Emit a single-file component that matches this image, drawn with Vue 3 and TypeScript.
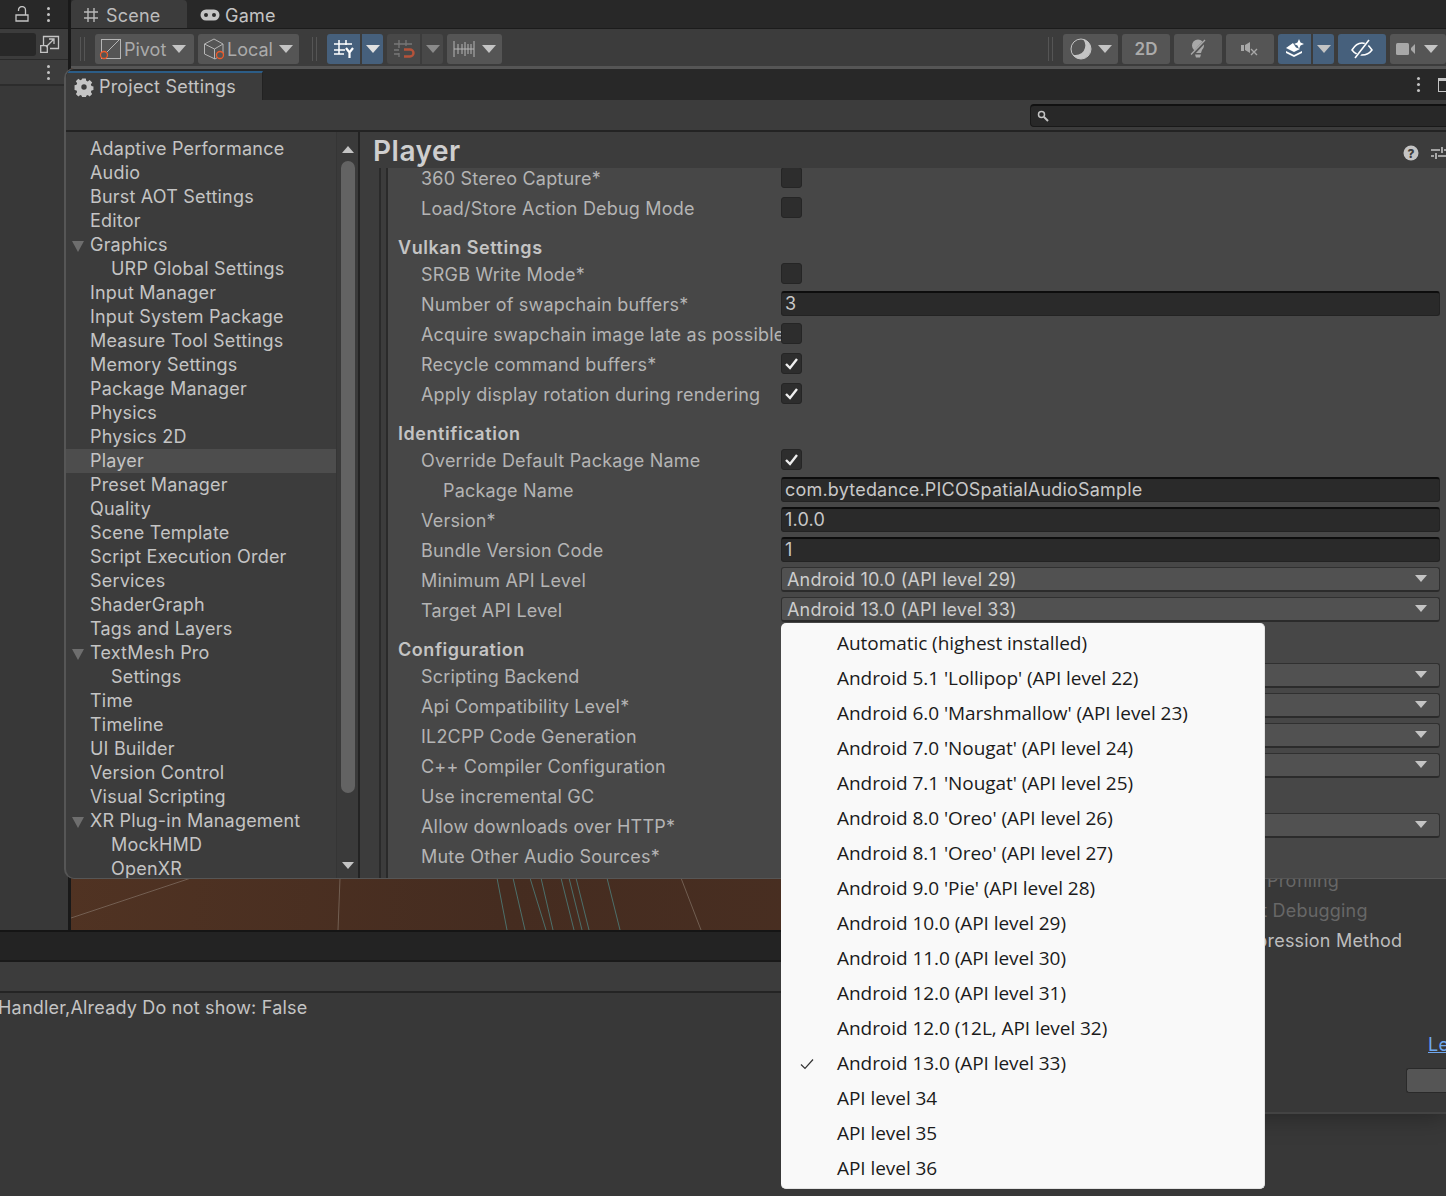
<script setup lang="ts">
type RowKind = 'off' | 'on' | 'input' | 'select'

interface NavItem {
  name: string
  child?: boolean
  open?: boolean
  active?: boolean
}

interface Row {
  label: string
  kind: RowKind
  value?: string
  sub?: boolean
}

interface Section {
  title?: string
  rows: Row[]
}

const navItems: NavItem[] = [
  { name: 'Adaptive Performance' },
  { name: 'Audio' },
  { name: 'Burst AOT Settings' },
  { name: 'Editor' },
  { name: 'Graphics', open: true },
  { name: 'URP Global Settings', child: true },
  { name: 'Input Manager' },
  { name: 'Input System Package' },
  { name: 'Measure Tool Settings' },
  { name: 'Memory Settings' },
  { name: 'Package Manager' },
  { name: 'Physics' },
  { name: 'Physics 2D' },
  { name: 'Player', active: true },
  { name: 'Preset Manager' },
  { name: 'Quality' },
  { name: 'Scene Template' },
  { name: 'Script Execution Order' },
  { name: 'Services' },
  { name: 'ShaderGraph' },
  { name: 'Tags and Layers' },
  { name: 'TextMesh Pro', open: true },
  { name: 'Settings', child: true },
  { name: 'Time' },
  { name: 'Timeline' },
  { name: 'UI Builder' },
  { name: 'Version Control' },
  { name: 'Visual Scripting' },
  { name: 'XR Plug-in Management', open: true },
  { name: 'MockHMD', child: true },
  { name: 'OpenXR', child: true },
]

const sections: Section[] = [
  {
    rows: [
      { label: '360 Stereo Capture*', kind: 'off' },
      { label: 'Load/Store Action Debug Mode', kind: 'off' },
    ],
  },
  {
    title: 'Vulkan Settings',
    rows: [
      { label: 'SRGB Write Mode*', kind: 'off' },
      { label: 'Number of swapchain buffers*', kind: 'input', value: '3' },
      { label: 'Acquire swapchain image late as possible*', kind: 'off' },
      { label: 'Recycle command buffers*', kind: 'on' },
      { label: 'Apply display rotation during rendering', kind: 'on' },
    ],
  },
  {
    title: 'Identification',
    rows: [
      { label: 'Override Default Package Name', kind: 'on' },
      { label: 'Package Name', kind: 'input', value: 'com.bytedance.PICOSpatialAudioSample', sub: true },
      { label: 'Version*', kind: 'input', value: '1.0.0' },
      { label: 'Bundle Version Code', kind: 'input', value: '1' },
      { label: 'Minimum API Level', kind: 'select', value: 'Android 10.0 (API level 29)' },
      { label: 'Target API Level', kind: 'select', value: 'Android 13.0 (API level 33)' },
    ],
  },
  {
    title: 'Configuration',
    rows: [
      { label: 'Scripting Backend', kind: 'select' },
      { label: 'Api Compatibility Level*', kind: 'select' },
      { label: 'IL2CPP Code Generation', kind: 'select' },
      { label: 'C++ Compiler Configuration', kind: 'select' },
      { label: 'Use incremental GC', kind: 'off' },
      { label: 'Allow downloads over HTTP*', kind: 'select' },
      { label: 'Mute Other Audio Sources*', kind: 'off' },
    ],
  },
]

const apiLevels: string[] = [
  'Automatic (highest installed)',
  "Android 5.1 'Lollipop' (API level 22)",
  "Android 6.0 'Marshmallow' (API level 23)",
  "Android 7.0 'Nougat' (API level 24)",
  "Android 7.1 'Nougat' (API level 25)",
  "Android 8.0 'Oreo' (API level 26)",
  "Android 8.1 'Oreo' (API level 27)",
  "Android 9.0 'Pie' (API level 28)",
  'Android 10.0 (API level 29)',
  'Android 11.0 (API level 30)',
  'Android 12.0 (API level 31)',
  'Android 12.0 (12L, API level 32)',
  'Android 13.0 (API level 33)',
  'API level 34',
  'API level 35',
  'API level 36',
]
const selectedLevel = 'Android 13.0 (API level 33)'
</script>

<template>
  <div class="editor">
    <div class="upper">
      <aside class="hierarchy">
        <div class="hier-tabs">
          <svg class="lock" width="14" height="16" viewBox="0 0 14 16"><path d="M3.500 5V4a3.500 3.500 0 0 1 7 0v5H1v6h12V9h-2.500" fill="none" stroke="#c4c4c4" stroke-width="1.300" /></svg>
          <span class="dots"><i></i><i></i><i></i></span>
        </div>
        <div class="hier-search">
          <div class="hier-field"></div>
          <svg width="20" height="18" viewBox="0 0 20 18"><path d="M3.500 10V1.500h15v12H10" fill="none" stroke="#c4c4c4" stroke-width="1.300" /><path d="M.7 10.700h6.600v6.600H.7z" fill="none" stroke="#c4c4c4" stroke-width="1.300" /><path d="M6 12l8-8M9 4h5v5" fill="none" stroke="#c4c4c4" stroke-width="1.300" /></svg>
        </div>
        <div class="hier-head"><span class="dots"><i></i><i></i><i></i></span></div>
      </aside>

      <div class="scene">
        <div class="tabs">
          <div class="tab tab-active">
            <svg width="16" height="16" viewBox="0 0 16 16"><path d="M5 1v14M11 1v14M1 5h14M1 11h14" stroke="#b8b8b8" stroke-width="1.400" /></svg>
            <span>Scene</span>
          </div>
          <div class="tab">
            <svg width="20" height="12" viewBox="0 0 20 12"><rect x="0.500" y="0.500" width="19" height="11" rx="5.500" fill="#c4c4c4" /><circle cx="6" cy="6" r="2" fill="#2b2b2b" /><circle cx="14" cy="6" r="2" fill="#2b2b2b" /></svg>
            <span>Game</span>
          </div>
        </div>

        <div class="toolbar">
          <span class="grip"></span>
          <button class="tool wide pivot">
            <svg width="22" height="22" viewBox="0 0 22 22"><rect x="2.500" y="1.500" width="19" height="19" fill="none" stroke="#b5b5b5" stroke-width="1" /><path d="M6 16L20 2" stroke="#b5b5b5" /><circle cx="5" cy="17" r="3.500" fill="#555" stroke="#f05a28" stroke-width="1.300" /></svg>
            <span>Pivot</span><i class="caret"></i>
          </button>
          <button class="tool wide local">
            <svg width="24" height="22" viewBox="0 0 24 22"><path d="M1.500 6L11 1l9 5v10l-8 5-10.500-5zM1.500 6l10 5 8.500-5M11.500 11v10" fill="none" stroke="#b5b5b5" /><circle cx="17" cy="17" r="3.500" fill="#555" stroke="#f05a28" stroke-width="1.300" /></svg>
            <span>Local</span><i class="caret"></i>
          </button>
          <span class="grip"></span>
          <div class="split">
            <button class="tool blue seg-main">
              <svg width="22" height="20" viewBox="0 0 22 20"><path d="M6 1v14M13 1v5M1 5h18M1 11h11M1 15h10" stroke="#fff" stroke-width="1.500" fill="none" /><path d="M13 9l3.500 4.500L20 9M16.500 13.500V19" stroke="#fff" stroke-width="2.200" fill="none" /></svg>
            </button>
            <button class="tool blue seg-arrow"><i class="caret bright"></i></button>
          </div>
          <div class="split">
            <button class="tool dim seg-main">
              <svg width="22" height="20" viewBox="0 0 22 20"><path d="M6 1v8M13 1v6M1 5h18M1 11h5M1 15h5M6 14v4" stroke="#777" stroke-width="1.300" fill="none" /><path d="M11 10.500h6a3 3 0 0 1 0 7h-6" fill="none" stroke="#b5533a" stroke-width="2.400" /></svg>
            </button>
            <button class="tool dim seg-arrow"><i class="caret muted"></i></button>
          </div>
          <button class="tool ticks">
            <svg width="22" height="20" viewBox="0 0 22 20"><path d="M1 2v16M21 2v16M1 10h20M5 5v10M9 5v10M12 3v14M15 5v10M18 5v10" stroke="#b5b5b5" fill="none" /></svg>
            <i class="caret"></i>
          </button>

          <span class="spacer"></span>

          <span class="grip"></span>
          <button class="tool shading">
            <svg width="22" height="22" viewBox="0 0 22 22"><circle cx="11" cy="11" r="10" fill="none" stroke="#c4c4c4" stroke-width="1" /><path d="M13 1.200A10 10 0 1 1 2.500 16.500A9.600 9.600 0 0 0 13 1.200z" fill="#c4c4c4" /></svg>
            <i class="caret"></i>
          </button>
          <button class="tool plain two-d">2D</button>
          <button class="tool plain">
            <svg width="16" height="20" viewBox="0 0 16 20"><path d="M4 11a6 6 0 1 1 8 0l-1 3H5z" fill="#a8a8a8" /><path d="M5 15.500h6l-1 3H6z" fill="#a8a8a8" /><path d="M2 16L15 2" stroke="#555" stroke-width="3" /><path d="M1 15.500L15 1" stroke="#a8a8a8" stroke-width="1.300" /></svg>
          </button>
          <button class="tool plain">
            <svg width="18" height="14" viewBox="0 0 18 14"><path d="M0 3h3v6H0zM4 3l5-3v11L4 8z" fill="#a8a8a8" /><path d="M10 7l6 6M16 7l-6 6" stroke="#a8a8a8" stroke-width="1.400" /></svg>
          </button>
          <div class="split">
            <button class="tool blue seg-main">
              <svg width="20" height="20" viewBox="0 0 20 20"><path d="M14 0l1.500 3.500L19 5l-3.500 1.500L14 10l-1.500-3.500L9 5l3.500-1.500z" fill="#fff" /><path d="M8 4L1 9l8 4 6-3-4-1.500z" fill="#fff" /><path d="M1 12l8 4 8-4v2l-8 4-8-4z" fill="#fff" /></svg>
            </button>
            <button class="tool blue seg-arrow"><i class="caret"></i></button>
          </div>
          <button class="tool blue plain">
            <svg width="22" height="20" viewBox="0 0 22 20"><path d="M1 11c3-5 6-7 10-7s7 2 10 7c-3 4-6 5-10 5s-7-1-10-5z" fill="none" stroke="#fff" stroke-width="1.500" /><path d="M5 19L19 1" stroke="#46607c" stroke-width="4" /><path d="M4 19L18 1" stroke="#fff" stroke-width="1.600" /></svg>
          </button>
          <button class="tool camera">
            <svg width="20" height="12" viewBox="0 0 20 12"><rect width="13" height="12" rx="1.500" fill="#a8a8a8" /><path d="M15 5l4-4v10l-4-4z" fill="#a8a8a8" /></svg>
            <i class="caret"></i>
          </button>
        </div>

        <div class="view">
          <svg class="view-lines" width="710" height="52" viewBox="0 0 710 52">
            <path d="M120 0L0 40M269 0L267 52M610 0L630 52" stroke="#7c6a5e" fill="none" opacity="0.8" />
            <path d="M426 0L436 52M442 0L454 52M459 0L475 52M470 0L482 52M490 0L503 52M498 0L511 52M505 0L518 52M536 0L549 52" stroke="#4f8784" fill="none" opacity="0.75" />
          </svg>
        </div>
      </div>
    </div>

    <div class="bar bar-dark"></div>
    <div class="bar bar-mid"></div>
    <div class="console"><span>Handler,Already Do not show: False</span></div>

    <!-- build settings window, mostly behind the other two -->
    <section class="build-window">
      <div class="build-row dimmed">Deep Profiling</div>
      <div class="build-row dimmed">Script Debugging</div>
      <div class="build-row">Compression Method</div>
      <div class="build-foot">
        <a class="learn">Learn about Unity Build Automation</a>
        <div class="build-btn"></div>
      </div>
    </section>

    <section class="settings-window">
      <div class="win-tabs">
        <div class="win-tab">
          <svg width="20" height="20" viewBox="0 0 20 20"><path fill="#c4c4c4" fill-rule="evenodd" d="M8 .5h4l.5 2.600 1.600.7 2.200-1.500 2.800 2.800-1.500 2.200.7 1.600 2.200.5v4l-2.200.5-.7 1.600 1.500 2.200-2.800 2.800-2.200-1.500-1.600.7-.5 2.700H8l-.5-2.700-1.600-.7-2.200 1.500-2.800-2.800 1.500-2.200-.7-1.600-2.200-.5V8l2.200-.5.7-1.600-1.500-2.200 2.800-2.800 2.200 1.500 1.600-.7zM10 7a3 3 0 1 0 0 6 3 3 0 0 0 0-6z" transform="translate(1 1) scale(.9)" /></svg>
          <span>Project Settings</span>
        </div>
        <span class="spacer"></span>
        <span class="dots win-dots"><i></i><i></i><i></i></span>
        <span class="maximize"></span>
      </div>
      <div class="win-search">
        <div class="search-field">
          <svg width="12" height="12" viewBox="0 0 12 12"><circle cx="4.500" cy="4.500" r="3" fill="none" stroke="#c4c4c4" stroke-width="1.500" /><path d="M7 7l4 4" stroke="#c4c4c4" stroke-width="2" /></svg>
        </div>
      </div>

      <div class="win-body">
        <nav class="nav">
          <ul class="nav-list">
            <li v-for="item in navItems" :key="item.name" class="nav-item" :class="{ active: item.active, child: item.child }">
              <i v-if="item.open" class="fold"></i>
              <span>{{ item.name }}</span>
            </li>
          </ul>
          <div class="scrollbar">
            <i class="arrow up"></i>
            <div class="thumb"></div>
            <i class="arrow down"></i>
          </div>
        </nav>

        <main class="panel">
          <header class="panel-head">
            <h1>Player</h1>
            <svg class="help" width="16" height="16" viewBox="0 0 16 16"><circle cx="8" cy="8" r="7.500" fill="#c4c4c4" /><text x="8" y="12.500" text-anchor="middle" font-size="12" font-weight="800" font-family="Inter, sans-serif" fill="#3c3c3c">?</text></svg>
            <svg class="presets" width="18" height="16" viewBox="0 0 18 16"><path d="M0 5h9M13 5h5M0 11h3M7 11h11M11 2v6M5 8v6" stroke="#c4c4c4" stroke-width="1.600" fill="none" /></svg>
          </header>
          <div class="panel-scroll">
            <div class="gutter"></div>
            <div class="fields">
              <template v-for="(section, i) in sections" :key="i">
                <h2 v-if="section.title" class="section-title">{{ section.title }}</h2>
                <div v-for="row in section.rows" :key="row.label" class="row">
                  <label class="row-label" :class="{ sub: row.sub }">{{ row.label }}</label>
                  <div class="row-value">
                    <span v-if="row.kind === 'off' || row.kind === 'on'" class="check">
                      <svg v-if="row.kind === 'on'" width="15" height="13" viewBox="0 0 15 13"><path d="M2 7l4 4 7-9" fill="none" stroke="#eee" stroke-width="2.400" /></svg>
                    </span>
                    <div v-else-if="row.kind === 'input'" class="text-input">{{ row.value }}</div>
                    <div v-else class="select"><span>{{ row.value }}</span><i class="caret small"></i></div>
                  </div>
                </div>
              </template>
            </div>
          </div>
        </main>
      </div>
    </section>

    <ul class="menu">
      <li v-for="level in apiLevels" :key="level" class="menu-item">
        <svg v-if="level === selectedLevel" class="tick" width="14" height="12" viewBox="0 0 14 12"><path d="M1 6.500L5 10.500 13 1.500" fill="none" stroke="#333" stroke-width="1.200" /></svg>
        <span>{{ level }}</span>
      </li>
    </ul>
  </div>
</template>

<style scoped>
.editor {
  position: relative;
  width: 1446px;
  height: 1196px;
  overflow: hidden;
  background: #383838;
  color: #bdbdbd;
  font-family: Inter, "Liberation Sans", sans-serif;
  font-size: 18px;
  letter-spacing: 0.2px;
  display: flex;
  flex-direction: column;
}

ul {
  list-style: none;
  margin: 0;
  padding: 0;
}

button {
  font: inherit;
  letter-spacing: inherit;
  border: 0;
  padding: 0;
  color: inherit;
}

.upper {
  height: 930px;
  display: flex;
  flex: none;
}

.hierarchy {
  width: 68px;
  flex: none;
  background: #383838;
  border-right: 3px solid #191919;
}

.hier-tabs {
  height: 28px;
  background: #282828;
  border-bottom: 1px solid #1c1c1c;
  display: flex;
  align-items: center;
  padding-left: 15px;
  gap: 18px;
}

.dots {
  display: flex;
  flex-direction: column;
  gap: 3px;
}

.dots i {
  width: 3px;
  height: 3px;
  background: #c4c4c4;
  border-radius: 50%;
}

.hier-search {
  height: 30px;
  background: #3c3c3c;
  border-bottom: 1px solid #2a2a2a;
  display: flex;
  align-items: center;
  gap: 4px;
}

.hier-field {
  width: 36px;
  height: 23px;
  background: #282828;
  border-radius: 0 3px 3px 0;
}

.hier-head {
  height: 24px;
  background: #3c3c3c;
  border-bottom: 2px solid #2c2c2c;
  display: flex;
  align-items: center;
  padding-left: 47px;
}

.scene {
  flex: 1;
  min-width: 0;
  display: flex;
  flex-direction: column;
}

.tabs {
  height: 28px;
  background: #282828;
  border-bottom: 1px solid #1c1c1c;
  display: flex;
  flex: none;
}

.tab {
  display: flex;
  align-items: center;
  gap: 7px;
  color: #c4c4c4;
  padding: 2px 12px 0;
}

.tab-active {
  width: 116px;
  box-sizing: border-box;
  background: #3c3c3c;
  border-radius: 4px 4px 0 0;
  color: #bdbdbd;
}

.tab + .tab {
  margin-left: 1px;
  gap: 5px;
}

.toolbar {
  height: 39px;
  flex: none;
  box-sizing: border-box;
  background: #3c3c3c;
  border-bottom: 2px solid #555;
  display: flex;
  align-items: center;
  padding-top: 4px;
  padding-bottom: 1px;
  gap: 4px;
}

.spacer {
  flex: 1;
}

.grip {
  width: 5px;
  height: 24px;
  border-left: 1px solid #555;
  border-right: 1px solid #555;
  flex: none;
  margin: 0 6px 0 9px;
  box-sizing: border-box;
}

.tool {
  height: 30px;
  background: #555;
  border-radius: 3px;
  display: flex;
  align-items: center;
  justify-content: center;
  color: #ababab;
  flex: none;
}

.wide {
  gap: 3px;
  justify-content: flex-start;
  letter-spacing: 0;
}

.pivot {
  width: 99px;
  padding-left: 4px;
}

.local {
  width: 101px;
  padding-left: 5px;
}

.local span {
  margin-left: -3px;
}

.caret {
  display: inline-block;
  width: 0;
  height: 0;
  border-left: 7px solid transparent;
  border-right: 7px solid transparent;
  border-top: 8px solid #c4c4c4;
  margin-left: 3px;
}

.caret.bright {
  border-top-color: #e0e0e0;
}

.caret.muted {
  border-top-color: #8a8a8a;
}

.caret.small {
  border-left-width: 6px;
  border-right-width: 6px;
  border-top-width: 7px;
  margin: 0;
}

.split {
  display: flex;
  gap: 2px;
  flex: none;
}

.seg-main {
  width: 33px;
  border-radius: 3px 0 0 3px;
}

.seg-arrow {
  width: 21px;
  border-radius: 0 3px 3px 0;
}

.seg-arrow .caret {
  margin: 0;
}

.blue {
  background: #46607c;
}

.dim {
  background: #484848;
}

.ticks {
  width: 55px;
  gap: 4px;
}

.shading {
  width: 55px;
  gap: 4px;
}

.shading .caret {
  margin-left: 2px;
}

.plain {
  width: 48px;
}

.two-d {
  font-size: 17px;
  font-weight: 600;
  letter-spacing: 0;
}

.camera {
  width: 56px;
  gap: 6px;
  padding-right: 2px;
  box-sizing: border-box;
}

.camera .caret {
  margin-left: 2px;
}

.view {
  flex: 1;
  position: relative;
  background: linear-gradient(95deg, #523423 0%, #452c20 35%, #4f3324 100%);
}

.view-lines {
  position: absolute;
  left: 0;
  bottom: 0;
}

.bar {
  flex: none;
  box-sizing: border-box;
}

.bar-dark {
  height: 32px;
  background: #232323;
  border-top: 2px solid #151515;
  border-bottom: 2px solid #1a1a1a;
}

.bar-mid {
  height: 31px;
  background: #3c3c3c;
  border-bottom: 2px solid #242424;
}

.console {
  flex: 1;
  padding-top: 3px;
  line-height: 24px;
  background: #383838;
  color: #c4c4c4;
}

.console span {
  display: block;
  margin-left: -2px;
}

.build-window {
  position: absolute;
  left: 1100px;
  top: 866px;
  width: 346px;
  height: 248px;
  box-sizing: border-box;
  padding-left: 116px;
  background: #383838;
  border-bottom: 2px solid #434343;
  box-shadow: 0 2px 24px rgba(0, 0, 0, 0.35);
  overflow: hidden;
  white-space: nowrap;
}

.build-row {
  height: 30px;
  line-height: 30px;
}

.dimmed {
  color: #676767;
}

.build-foot {
  margin-top: 76px;
  margin-left: 190px;
}

.learn {
  display: block;
  margin-left: 22px;
  line-height: 26px;
  color: #6fa8f0;
  text-decoration: underline;
}

.build-btn {
  margin-top: 10px;
  width: 60px;
  height: 25px;
  background: #555;
  border: 1px solid #2a2a2a;
  border-right: 0;
  border-radius: 3px 0 0 3px;
  box-sizing: border-box;
}

.settings-window {
  position: absolute;
  left: 64px;
  top: 68px;
  width: 1382px;
  height: 811px;
  box-sizing: border-box;
  overflow: hidden;
  background: #3c3c3c;
  border: 1px solid #565656;
  border-width: 1px 0 1px 2px;
  border-radius: 10px 0 0 10px;
  display: flex;
  flex-direction: column;
}

.win-tabs {
  height: 31px;
  flex: none;
  background: #282828;
  display: flex;
  align-items: flex-end;
}

.win-tab {
  width: 197px;
  height: 29px;
  box-sizing: border-box;
  display: flex;
  align-items: center;
  gap: 5px;
  padding-left: 8px;
  background: #3c3c3c;
  border-top: 2px solid #2c5d87;
  border-right: 1px solid #222;
  color: #c4c4c4;
}

.win-tab svg {
  flex: none;
}

.win-dots {
  align-self: center;
  margin-right: 18px;
}

.maximize {
  align-self: center;
  width: 14px;
  height: 14px;
  box-sizing: border-box;
  border: 1px solid #c4c4c4;
  border-top-width: 3px;
  margin-right: -6px;
}

.win-search {
  height: 30px;
  flex: none;
  background: #3c3c3c;
  display: flex;
  justify-content: flex-end;
  align-items: center;
  border-bottom: 2px solid #232323;
}

.search-field {
  width: 416px;
  height: 23px;
  box-sizing: border-box;
  background: #282828;
  border: 1px solid #191919;
  border-top: 2px solid #111;
  border-right: 0;
  border-radius: 4px 0 0 4px;
  display: flex;
  align-items: center;
  padding-left: 6px;
}

.win-body {
  flex: 1;
  min-height: 0;
  display: flex;
}

.nav {
  width: 292px;
  flex: none;
  display: flex;
  overflow: hidden;
  border-right: 2px solid #232323;
}

.nav-list {
  width: 270px;
  flex: none;
  padding-top: 5px;
}

.nav-item {
  position: relative;
  height: 24px;
  line-height: 24px;
  padding-left: 24px;
  color: #c4c4c4;
  white-space: nowrap;
}

.nav-item.child {
  padding-left: 45px;
}

.nav-item.active {
  background: #4d4d4d;
}

.fold {
  position: absolute;
  left: 6px;
  top: 8px;
  border-left: 6px solid transparent;
  border-right: 6px solid transparent;
  border-top: 11px solid #6e6e6e;
}

.scrollbar {
  flex: 1;
  position: relative;
  background: #3a3a3a;
  display: flex;
  flex-direction: column;
  align-items: center;
  padding-top: 14px;
  border-left: 1px solid #353535;
}

.thumb {
  width: 14px;
  height: 632px;
  margin-top: 8px;
  background: #636363;
  border-radius: 7px;
}

.arrow {
  border-left: 6px solid transparent;
  border-right: 6px solid transparent;
}

.arrow.up {
  border-bottom: 7px solid #c4c4c4;
}

.arrow.down {
  border-top: 7px solid #c4c4c4;
  margin-top: 69px;
}

.panel {
  flex: 1;
  min-width: 0;
  display: flex;
  flex-direction: column;
}

.panel-head {
  height: 36px;
  flex: none;
  display: flex;
  align-items: center;
  background: #3c3c3c;
  padding-left: 13px;
  z-index: 1;
}

.panel-head h1 {
  margin: 2px 0 0;
  flex: 1;
  font-size: 28px;
  font-weight: 600;
  color: #cfcfcf;
  letter-spacing: 0.5px;
}

.help {
  margin-top: 6px;
  flex: none;
}

.presets {
  margin: 6px -3px 0 12px;
  flex: none;
}

.panel-scroll {
  flex: 1;
  min-height: 0;
  display: flex;
  overflow: hidden;
  background: #474747;
}

.gutter {
  width: 28px;
  flex: none;
  background: #3c3c3c;
  box-sizing: border-box;
  border-right: 2px solid #2a2a2a;
  position: relative;
}

.gutter::before {
  content: "";
  position: absolute;
  left: 19px;
  top: 0;
  bottom: 0;
  width: 2px;
  background: #2a2a2a;
}

.fields {
  flex: 1;
  min-width: 0;
  margin-top: -6px;
  padding: 0 6px 0 10px;
}

.section-title {
  margin: 0;
  height: 36px;
  padding-top: 14px;
  box-sizing: border-box;
  line-height: 24px;
  font-size: 18px;
  font-weight: 600;
  letter-spacing: 0.55px;
  color: #c4c4c4;
}

.row {
  height: 30px;
  display: flex;
  align-items: center;
}

.row-label {
  width: 383px;
  flex: none;
  padding: 2px 0 0 23px;
  box-sizing: border-box;
  overflow: hidden;
  white-space: nowrap;
  color: #b4b4b4;
}

.row-label.sub {
  padding-left: 45px;
}

.row-value {
  flex: 1;
  min-width: 0;
  display: flex;
  align-items: center;
}

.check {
  width: 21px;
  height: 21px;
  box-sizing: border-box;
  background: #2d2d2d;
  border: 1px solid #252525;
  border-radius: 3px;
  display: flex;
  align-items: center;
  justify-content: center;
}

.text-input {
  width: 100%;
  height: 25px;
  line-height: 22px;
  box-sizing: border-box;
  padding-left: 3px;
  background: #2a2a2a;
  border: 1px solid #232323;
  border-top: 2px solid #0d0d0d;
  border-radius: 3px;
  color: #c8c8c8;
}

.select {
  width: 100%;
  height: 25px;
  line-height: 23px;
  box-sizing: border-box;
  padding: 0 12px 0 5px;
  background: #515151;
  border: 1px solid #303030;
  border-bottom: 2px solid #2b2b2b;
  border-radius: 3px;
  color: #cdcdcd;
  display: flex;
  justify-content: space-between;
  align-items: center;
}

.select span {
  padding-top: 2px;
}

.menu {
  position: absolute;
  left: 781px;
  top: 623px;
  width: 484px;
  height: 566px;
  box-sizing: border-box;
  padding-top: 3px;
  background: #f9f9f9;
  border-right: 1px solid #e4e4e4;
  border-bottom: 1px solid #e4e4e4;
  border-radius: 5px;
  font-family: "Open Sans", "Noto Sans", sans-serif;
  font-size: 19px;
  letter-spacing: -0.05px;
  color: #1b1b1b;
}

.menu-item {
  position: relative;
  height: 35px;
  line-height: 35px;
  padding-left: 56px;
  white-space: nowrap;
}

.tick {
  position: absolute;
  left: 19px;
  top: 12px;
}
</style>

<style>
html,
body {
  margin: 0;
  overflow: hidden;
}
</style>
